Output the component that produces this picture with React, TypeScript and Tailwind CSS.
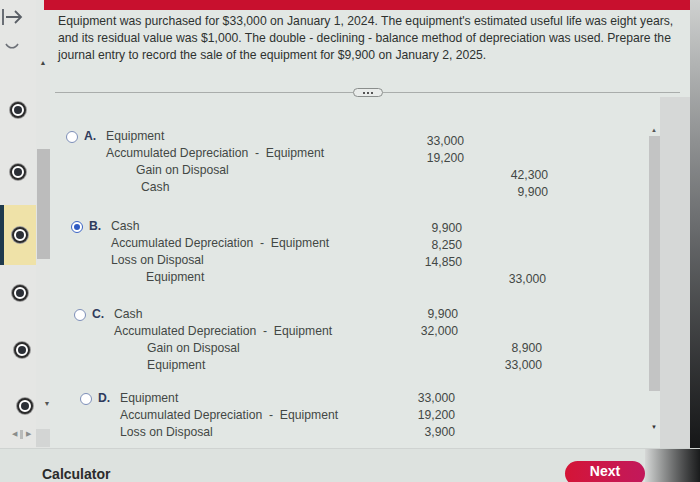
import React from 'react';

type Line = { text: string; indent?: number; debit?: string; credit?: string };

interface OptionProps {
  letter: string;
  selected?: boolean;
  ml: string;
  labelW: string;
  shift: string;
  lines: Line[];
}

const indents: Record<number, string> = {
  0: 'pl-0',
  30: 'pl-[30px]',
  33: 'pl-[33px]',
  35: 'pl-[35px]',
};

const Radio: React.FC<{ selected?: boolean }> = ({ selected }) => (
  <span
    className={`w-[12px] h-[12px] rounded-full border flex items-center justify-center bg-white ${
      selected ? 'border-[#3b64c4]' : 'border-[#7d8fb8]'
    }`}
  >
    {selected && <span className="w-[6px] h-[6px] rounded-full bg-[#2f5bc2]" />}
  </span>
);

const Option: React.FC<OptionProps> = ({ letter, selected, ml, labelW, shift, lines }) => (
  <div className={`flex items-start ${ml}`}>
    <div className="h-[17px] flex items-center">
      <Radio selected={selected} />
    </div>
    <span className="w-[22px] ml-[6px] font-bold text-[#2f3b5c] leading-[17px]">{letter}.</span>
    <div className={`${labelW} flex flex-col`}>
      {lines.map((l, i) => (
        <div key={i} className={`h-[17px] leading-[17px] whitespace-nowrap ${indents[l.indent ?? 0]}`}>
          {l.text}
        </div>
      ))}
    </div>
    <div className={`w-[60px] flex flex-col text-right ${shift}`}>
      {lines.map((l, i) => (
        <div key={i} className="h-[17px] leading-[17px]">{l.debit ?? ''}</div>
      ))}
    </div>
    <div className={`w-[84px] flex flex-col text-right ${shift}`}>
      {lines.map((l, i) => (
        <div key={i} className="h-[17px] leading-[17px]">{l.credit ?? ''}</div>
      ))}
    </div>
  </div>
);

const RailDot: React.FC = () => (
  <span className="w-[16px] h-[16px] rounded-full border-2 border-[#2b2b2b] bg-white flex items-center justify-center shadow-[0_0_0_1px_#9a9a9a]">
    <span className="w-[8px] h-[8px] rounded-full bg-[#2b2f36]" />
  </span>
);

const AD = 'Accumulated Depreciation\u00a0 - \u00a0Equipment';

export default function App() {
  return (
    <div
      className="w-[700px] h-[482px] overflow-hidden flex flex-col bg-[#e2e7e4] text-[#434745]"
      style={{ fontFamily: '"Liberation Sans", Arial, sans-serif' }}
    >
      <div className="flex h-[448px]">
        {/* left rail */}
        <div className="w-[36px] flex flex-col bg-[#e5e6e4]">
          <div className="h-[96px] flex flex-col pl-[2px] pt-[8px]">
            <div className="flex items-center text-[#5a5f66]">
              <span className="w-[2px] h-[16px] bg-[#6a6f76]" />
              <svg width="20" height="18" viewBox="0 0 20 18" fill="none" stroke="#5a5f66" strokeWidth="1.8">
                <path d="M2 9h15M11 3l6 6-6 6" />
              </svg>
            </div>
            <svg className="mt-[16px] ml-[2px]" width="16" height="10" viewBox="0 0 16 10" fill="none" stroke="#6d7178" strokeWidth="1.6">
              <path d="M2 2c3 5 9 5 12 0" />
            </svg>
          </div>
          <div className="h-[28px] flex items-center pl-[10px]"><RailDot /></div>
          <div className="h-[34px]" />
          <div className="h-[28px] flex items-center pl-[10px]"><RailDot /></div>
          <div className="h-[19px]" />
          <div className="h-[60px] flex items-center pl-[8px] bg-[#efe2a8] border-l-[4px] border-[#1f3a4d]">
            <RailDot />
          </div>
          <div className="h-[14px]" />
          <div className="h-[28px] flex items-center pl-[12px]"><RailDot /></div>
          <div className="h-[29px]" />
          <div className="h-[28px] flex items-center pl-[14px]"><RailDot /></div>
          <div className="h-[28px]" />
          <div className="h-[28px] flex items-center pl-[17px]"><RailDot /></div>
          <div className="flex-1 flex items-center pl-[12px] gap-[3px] text-[7px] text-[#8a8d8c]">
            <span>◀</span>
            <span className="w-[3px] h-[9px] bg-[#b9bbba]" />
            <span>▶</span>
          </div>
        </div>
        {/* left mini scroller */}
        <div className="w-[14px] flex flex-col items-center bg-[#e3e5e3]">
          <span className="mt-[58px] text-[7px] text-[#444]">▲</span>
          <span className="mt-[80px] w-[13px] h-[110px] bg-[#bcbcbc]" />
          <span className="mt-[140px] ml-[8px] text-[7px] text-[#555]">▼</span>
          <span className="mt-[20px] w-[14px] h-[18px] bg-[#d3d5d4]" />
          <div className="flex-1" />
        </div>
        {/* main */}
        <div className="flex-1 flex flex-col">
          <div className="h-[10px] bg-[#c8102e] -ml-[6px]" />
          <div className="pl-[8px] pt-[3px] text-[12.2px] leading-[17px] text-[#2e3230] whitespace-nowrap">
            Equipment was purchased for $33,000 on January 1, 2024. The equipment's estimated useful life was eight years,
            <br />
            and its residual value was $1,000. The double - declining - balance method of depreciation was used. Prepare the
            <br />
            journal entry to record the sale of the equipment for $9,900 on January 2, 2025.
          </div>
          <div className="mt-[24px] ml-[5px] mr-[10px] flex items-center">
            <div className="flex-1 h-px bg-[#a9adab]" />
            <span className="w-[30px] h-[9px] rounded-full border border-[#8a8e8c] bg-[#e9ecea] flex items-center justify-center gap-[2px]">
              <span className="w-[2px] h-[2px] bg-[#555]" />
              <span className="w-[2px] h-[2px] bg-[#555]" />
              <span className="w-[2px] h-[2px] bg-[#555]" />
            </span>
            <div className="flex-1 h-px bg-[#a9adab]" />
          </div>
          <div className="flex-1 flex">
            <div className="flex-1 flex flex-col text-[12.2px] pt-[31px]">
              <Option
                letter="A"
                ml="ml-[16px]"
                labelW="w-[298px]"
                shift="pt-[5px]"
                lines={[
                  { text: 'Equipment', debit: '33,000' },
                  { text: AD, debit: '19,200' },
                  { text: 'Gain on Disposal', indent: 30, credit: '42,300' },
                  { text: 'Cash', indent: 35, credit: '9,900' },
                ]}
              />
              <Option
                letter="B"
                selected
                ml="ml-[21px] mt-[17px]"
                labelW="w-[291px]"
                shift="pt-[2px]"
                lines={[
                  { text: 'Cash', debit: '9,900' },
                  { text: AD, debit: '8,250' },
                  { text: 'Loss on Disposal', debit: '14,850' },
                  { text: 'Equipment', indent: 35, credit: '33,000' },
                ]}
              />
              <Option
                letter="C"
                ml="ml-[24px] mt-[18px]"
                labelW="w-[284px]"
                shift="pt-0"
                lines={[
                  { text: 'Cash', debit: '9,900' },
                  { text: AD, debit: '32,000' },
                  { text: 'Gain on Disposal', indent: 33, credit: '8,900' },
                  { text: 'Equipment', indent: 33, credit: '33,000' },
                ]}
              />
              <Option
                letter="D"
                ml="ml-[30px] mt-[16px]"
                labelW="w-[275px]"
                shift="pt-0"
                lines={[
                  { text: 'Equipment', debit: '33,000' },
                  { text: AD, debit: '19,200' },
                  { text: 'Loss on Disposal', debit: '3,900' },
                ]}
              />
            </div>
            {/* right scrollbar */}
            <div className="w-[12px] flex flex-col items-center pt-[30px]">
              <span className="text-[6px] text-[#555] leading-none">▲</span>
              <span className="mt-[3px] w-[11px] h-[255px] bg-[#c3c4c4]" />
              <span className="mt-[33px] text-[6px] text-[#333] leading-none">▼</span>
            </div>
            <div className="w-[30px] bg-[#d6d8d7]" />
          </div>
        </div>
        <div className="w-[10px] bg-gradient-to-b from-[#cfd1d0] via-[#6b6d6f] to-[#151617]" />
      </div>
      {/* bottom bar */}
      <div className="h-[34px] flex items-end bg-[#dde2df] border-t border-[#cfd3d1]">
        <div className="w-[42px] h-full" />
        <span className="font-bold text-[14px] text-[#2b2b2b] leading-none mb-[1px]">Calculator</span>
        <div className="flex-1" />
        <button className="w-[80px] h-[25px] -mb-[4px] rounded-full bg-gradient-to-r from-[#d41436] to-[#c2185b] text-white font-bold text-[14px] flex items-center justify-center pb-[4px]">
          Next
        </button>
        <div className="w-[55px] h-full bg-gradient-to-r from-[#d6d8d7] to-[#1a1b1c]" />
      </div>
    </div>
  );
}
